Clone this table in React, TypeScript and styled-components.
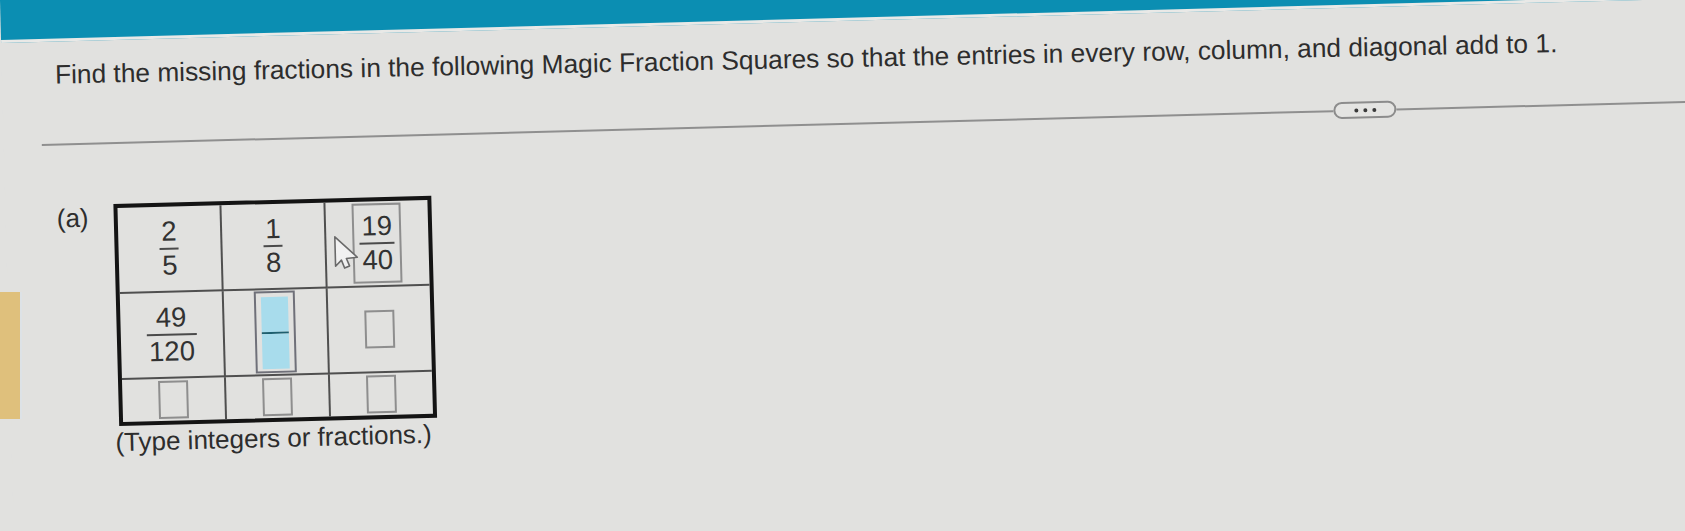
import React from "react";
import styled, { createGlobalStyle } from "styled-components";

const GlobalStyle = createGlobalStyle`
  html, body {
    margin: 0;
    padding: 0;
    background: #e1e1df;
    overflow: hidden;
  }
  body {
    font-family: "Liberation Sans", Arial, Helvetica, sans-serif;
    color: #2d2d2d;
  }
`;

const Screen = styled.div`
  position: relative;
  width: 1685px;
  height: 531px;
  overflow: hidden;
  background: #e1e1df;
`;

const Page = styled.main`
  width: 1780px;
  height: 640px;
  display: flex;
  flex-direction: column;
  transform: rotate(-1.5deg);
  transform-origin: 0 0;
  background: #e1e1df;
`;

const TopBar = styled.header`
  flex-shrink: 0;
  height: 40px;
  background: #0b8eb2;
  border-bottom: 3px solid #e9e9e7;
`;

const Question = styled.p`
  margin: 18px 0 0 53px;
  font-size: 26.3px;
  line-height: 30px;
  white-space: nowrap;
  transform: rotate(0.3deg);
  transform-origin: 0 50%;
`;

const DividerRow = styled.div`
  display: grid;
  grid-template-columns: 1292px auto 1fr;
  align-items: center;
  height: 17px;
  margin: 46px 0 0 38px;
`;

const Rule = styled.div`
  height: 2px;
  background: #8f8f8f;
`;

const MoreButton = styled.button`
  box-sizing: border-box;
  width: 63px;
  height: 17px;
  padding: 0;
  border: 2px solid #8c8c8c;
  border-radius: 9px;
  background: #e4e4e2;
  display: flex;
  align-items: center;
  justify-content: center;
  gap: 5px;
`;

const Dot = styled.span`
  width: 4px;
  height: 4px;
  border-radius: 50%;
  background: #3a3a3a;
`;

const Problem = styled.section`
  display: flex;
  align-items: flex-start;
  gap: 25px;
  margin: 49px 0 0 51px;
`;

const PartLabel = styled.span`
  margin-top: 2px;
  font-size: 26px;
  line-height: 30px;
`;

const Work = styled.div`
  margin-top: 4px;
  display: flex;
  flex-direction: column;
`;

const Square = styled.div`
  display: grid;
  grid-template-columns: 104px 104px 102px;
  grid-template-rows: 86px 86px 42px;
  width: fit-content;
  border: 4px solid #141414;
`;

const Cell = styled.div<{ $lastCol?: boolean; $lastRow?: boolean }>`
  position: relative;
  box-sizing: border-box;
  display: flex;
  align-items: center;
  justify-content: center;
  border-right: ${(p) => (p.$lastCol ? "none" : "2px solid #4f4f4f")};
  border-bottom: ${(p) => (p.$lastRow ? "none" : "2px solid #4f4f4f")};
`;

const Fraction = styled.span`
  display: inline-flex;
  flex-direction: column;
  align-items: center;
  font-size: 27.5px;
  line-height: 26px;
  color: #323232;
`;

const Part = styled.span`
  padding: 0 2px;
`;

const Bar = styled.span`
  align-self: stretch;
  height: 2px;
  margin: 3px 0;
  background: #4a4a4a;
`;

const AnswerBox = styled.div`
  box-sizing: border-box;
  height: 80px;
  padding: 0 5px;
  display: flex;
  align-items: center;
  border: 2px solid #8e8e8e;
`;

const EmptyBox = styled.div`
  box-sizing: border-box;
  width: 30px;
  height: 38px;
  border: 2px solid #8e8e8e;
`;

const FocusBox = styled.div`
  box-sizing: border-box;
  width: 41px;
  height: 82px;
  padding: 4px 5px 2px;
  display: flex;
  flex-direction: column;
  border: 2px solid #6f7079;
`;

const BlueField = styled.div`
  flex: 1;
  background: #a8dcec;
`;

const FocusBar = styled.div`
  height: 2px;
  background: #1e5f6f;
`;

const Pointer = styled.svg`
  position: absolute;
  left: 7px;
  top: 33px;
  width: 25px;
  height: 35px;
`;

const Hint = styled.p`
  margin: 1px 0 0 -4px;
  font-size: 26px;
  line-height: 30px;
  white-space: nowrap;
`;

const SideTab = styled.div`
  position: absolute;
  left: 0;
  top: 292px;
  width: 20px;
  height: 127px;
  background: #dfc07c;
  border-right: 2px solid #dde2e6;
`;

const Frac = ({ n, d }: { n: string; d: string }) => (
  <Fraction>
    <Part>{n}</Part>
    <Bar />
    <Part>{d}</Part>
  </Fraction>
);

export default function App() {
  return (
    <>
      <GlobalStyle />
      <Screen>
        <Page>
          <TopBar />
          <Question>
            Find the missing fractions in the following Magic Fraction Squares so that the entries in every row,
            column, and diagonal add to 1.
          </Question>
          <DividerRow>
            <Rule />
            <MoreButton aria-label="more">
              <Dot />
              <Dot />
              <Dot />
            </MoreButton>
            <Rule />
          </DividerRow>
          <Problem>
            <PartLabel>(a)</PartLabel>
            <Work>
              <Square>
                <Cell>
                  <Frac n="2" d="5" />
                </Cell>
                <Cell>
                  <Frac n="1" d="8" />
                </Cell>
                <Cell $lastCol>
                  <AnswerBox>
                    <Frac n="19" d="40" />
                  </AnswerBox>
                  <Pointer viewBox="0 0 25 35">
                    <path
                      d="M1.5 1.5 L1.5 31 L7.5 25 L10.5 33 L15.5 31 L12.5 23.5 L23.5 22.5 Z"
                      fill="#f1f1f1"
                      stroke="#6a6a6a"
                      strokeWidth="1.6"
                      strokeLinejoin="round"
                    />
                  </Pointer>
                </Cell>
                <Cell>
                  <Frac n="49" d="120" />
                </Cell>
                <Cell>
                  <FocusBox>
                    <BlueField />
                    <FocusBar />
                    <BlueField />
                  </FocusBox>
                </Cell>
                <Cell $lastCol>
                  <EmptyBox />
                </Cell>
                <Cell $lastRow>
                  <EmptyBox />
                </Cell>
                <Cell $lastRow>
                  <EmptyBox />
                </Cell>
                <Cell $lastRow $lastCol>
                  <EmptyBox />
                </Cell>
              </Square>
              <Hint>(Type integers or fractions.)</Hint>
            </Work>
          </Problem>
        </Page>
        <SideTab />
      </Screen>
    </>
  );
}
